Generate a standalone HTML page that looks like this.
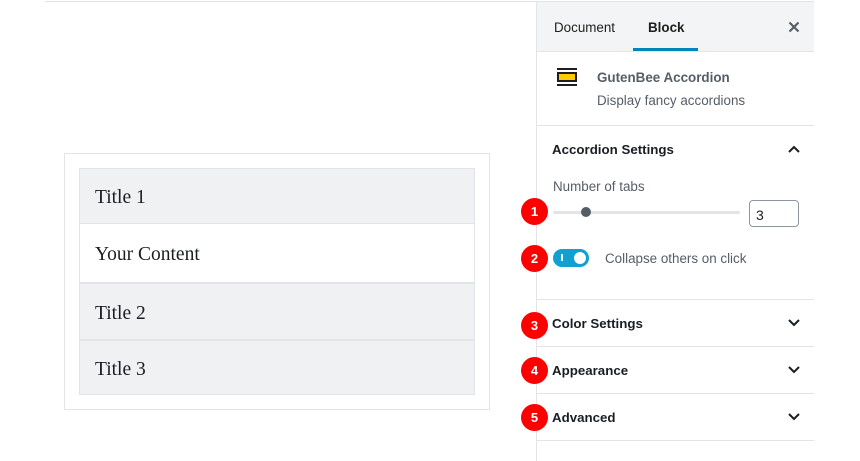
<!DOCTYPE html>
<html><head><style>
body{margin:0;width:860px;height:461px;background:#fff;position:relative;overflow:hidden;font-family:"Liberation Sans",sans-serif;color:#1e1e1e}
.a{position:absolute}
.row{position:absolute;left:80px;width:394px;font-family:"Liberation Serif",serif;font-size:19.5px;color:#191e23;padding-left:15px;padding-top:4px;box-sizing:border-box;display:flex;align-items:center}
.hd{background:#f0f1f2}
.ln{position:absolute;left:537px;width:277px;height:1px;background:#e2e4e7}
.c{position:absolute;width:27px;height:27px;border-radius:50%;background:#f00;color:#fff;font-weight:bold;font-size:13px;display:flex;align-items:center;justify-content:center;left:521px}
.sh{position:absolute;left:552px;font-weight:bold;font-size:13.3px;color:#191e23}
.chev{position:absolute;left:787px}
.t{font-size:13.4px}
</style></head><body>
<div class="a" style="left:45px;top:1px;width:769px;height:1px;background:#e2e4e7"></div>
<div class="a" style="left:64px;top:153px;width:424px;height:255px;border:1px solid #e2e4e7"></div>
<div class="a" style="left:79px;top:168px;width:394px;height:225px;border:1px solid #e2e4e7;background:#e2e4e7"></div>
<div class="row hd" style="top:169px;height:54px">Title 1</div>
<div class="row" style="top:224px;height:58px;background:#fff">Your Content</div>
<div class="row hd" style="top:284px;height:55px">Title 2</div>
<div class="row hd" style="top:341px;height:53px">Title 3</div>

<div class="a" style="left:536px;top:2px;width:1px;height:459px;background:#e2e4e7"></div>
<div class="a" style="left:537px;top:2px;width:277px;height:49px;background:#f3f4f5"></div>
<div class="a t" style="left:554px;top:20px">Document</div>
<div class="a t" style="left:648px;top:20px;font-weight:bold">Block</div>
<div class="a" style="left:633px;top:48px;width:65px;height:3px;background:#0085ba"></div>
<svg class="a" style="left:788px;top:21px" width="12" height="12"><path d="M1.5 1.5L10.5 10.5M10.5 1.5L1.5 10.5" stroke="#555d66" stroke-width="2.2"/></svg>
<div class="ln" style="top:51px"></div>
<div class="a" style="left:557px;top:68px;width:20px;height:2px;background:#1e1e1e"></div>
<div class="a" style="left:557px;top:72px;width:16px;height:6px;border:2px solid #1e1e1e;background:#fc0"></div>
<div class="a" style="left:557px;top:84px;width:20px;height:2px;background:#1e1e1e"></div>
<div class="a t" style="left:597px;top:70px;font-weight:bold;color:#555d66">GutenBee Accordion</div>
<div class="a t" style="left:597px;top:93px;color:#555d66">Display fancy accordions</div>
<div class="ln" style="top:125px"></div>
<div class="sh" style="top:142px">Accordion Settings</div>
<svg class="a" style="left:787px;top:142px" width="14" height="14"><path d="M2 10L7 5L12 10" stroke="#191e23" stroke-width="2" fill="none"/></svg>
<div class="a t" style="left:553px;top:179px;color:#555d66">Number of tabs</div>
<div class="a" style="left:553px;top:211px;width:187px;height:3px;background:#e2e4e7;border-radius:2px"></div>
<div class="a" style="left:581px;top:207px;width:10px;height:10px;border-radius:50%;background:#555d66"></div>
<div class="a" style="left:749px;top:200px;width:50px;height:27px;border:1px solid #8d96a0;border-radius:4px;box-sizing:border-box;font-size:14px;padding:6px 0 0 6px">3</div>
<div class="a" style="left:553px;top:249px;width:36px;height:18px;border-radius:9px;background:#11a0d2"></div>
<div class="a" style="left:561px;top:254px;width:2px;height:7px;background:#fff"></div>
<div class="a" style="left:574px;top:252px;width:12px;height:12px;border-radius:50%;background:#fff"></div>
<div class="a t" style="left:605px;top:251px;color:#555d66">Collapse others on click</div>
<div class="ln" style="top:299px"></div>
<div class="sh" style="top:316px">Color Settings</div>
<div class="ln" style="top:346px"></div>
<div class="sh" style="top:363px">Appearance</div>
<div class="ln" style="top:393px"></div>
<div class="sh" style="top:410px">Advanced</div>
<div class="ln" style="top:440px"></div>
<svg class="chev" style="top:316px" width="14" height="14"><path d="M2 4L7 9L12 4" stroke="#191e23" stroke-width="2" fill="none"/></svg>
<svg class="chev" style="top:363px" width="14" height="14"><path d="M2 4L7 9L12 4" stroke="#191e23" stroke-width="2" fill="none"/></svg>
<svg class="chev" style="top:410px" width="14" height="14"><path d="M2 4L7 9L12 4" stroke="#191e23" stroke-width="2" fill="none"/></svg>
<div class="c" style="top:198px">1</div>
<div class="c" style="top:245px">2</div>
<div class="c" style="top:312px">3</div>
<div class="c" style="top:357px">4</div>
<div class="c" style="top:404px">5</div>
</body></html>
